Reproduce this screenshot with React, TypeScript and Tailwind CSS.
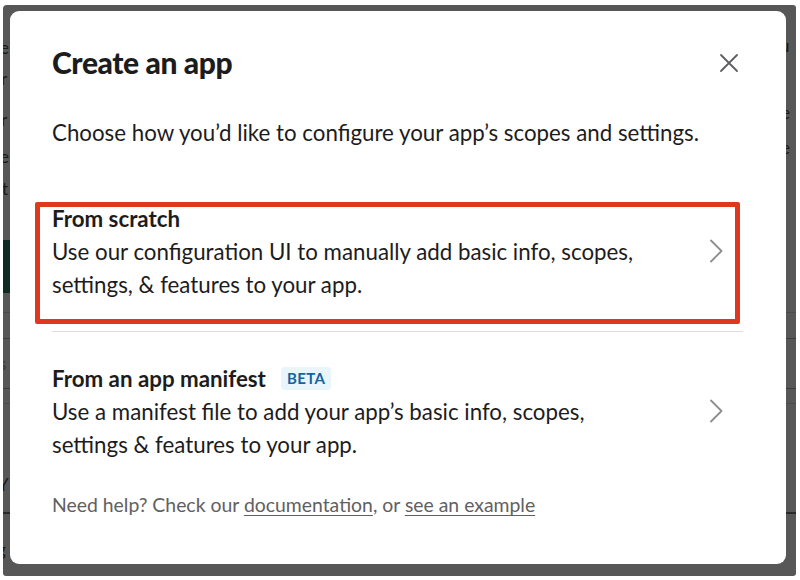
import React from "react";

const font = { fontFamily: "Lato, 'Noto Sans', sans-serif" };

function Chevron() {
  return (
    <svg width="14" height="24" viewBox="0 0 14 24" fill="none" className="shrink-0">
      <path d="M2 1.5 L12.5 12 L2 22.5" stroke="#8d8d8d" strokeWidth="1.8" strokeLinecap="round" strokeLinejoin="round" />
    </svg>
  );
}

function CloseX() {
  return (
    <svg width="20" height="20" viewBox="0 0 20 20" fill="none">
      <path d="M2 2 L18 18 M18 2 L2 18" stroke="#5e5d60" strokeWidth="1.8" strokeLinecap="round" />
    </svg>
  );
}

function Option({
  title,
  badge,
  line1,
  line2,
  className,
  children,
}: {
  title: string;
  badge?: string;
  line1: string;
  line2: string;
  className?: string;
  children?: React.ReactNode;
}) {
  return (
    <div className={"relative flex items-center justify-between py-[30px] " + (className ?? "")}>
      <div className="text-[22.3px] leading-[33px]">
        <div className="flex items-center gap-[15px] font-bold">
          {title}
          {badge && (
            <span className="bg-[#e8f5fa] text-[#1264a3] text-[15px] leading-[23px] px-[6px] rounded-[4px] font-bold tracking-[0.4px]">
              {badge}
            </span>
          )}
        </div>
        <div>{line1}</div>
        <div>{line2}</div>
      </div>
      <div className="mr-[20px] -mt-[2px]">
        <Chevron />
      </div>
      {children}
    </div>
  );
}

export default function App() {
  return (
    <div className="w-[800px] h-[580px] bg-white overflow-hidden" style={font}>
      <div className="ml-[3px] mt-[5px] w-[793px] h-[571px] bg-[#575757] rounded-tl-[4px] rounded-tr-[3px] rounded-b-[3px] flex pt-[6px] pb-[12px]">
        {/* left strip of the page behind the overlay */}
        <div className="relative w-[7px] shrink-0 overflow-hidden text-[#1a1a1a] text-[17px] leading-none">
          <span className="absolute left-[-3px] top-[28px]">e</span>
          <span className="absolute left-[-2px] top-[59px]">r</span>
          <span className="absolute left-[-2px] top-[100px]">r</span>
          <span className="absolute left-[-3px] top-[137px]">e</span>
          <span className="absolute left-[-1px] top-[169px]">t</span>
          <div className="absolute left-0 top-[229px] w-[7px] h-[53px] bg-[#0e2a22]" />
          <div className="absolute left-0 top-[301px] w-[7px] h-px bg-[#4a4a4a]" />
          <div className="absolute left-0 top-[327px] w-[7px] h-px bg-[#3c3c3c]" />
          <span className="absolute left-[-4px] top-[344px] text-[#3a3a3a]">s</span>
          <div className="absolute left-0 top-[377px] w-[7px] h-px bg-[#3c3c3c]" />
          <div className="absolute left-0 top-[392px] w-[7px] h-px bg-[#4c4c4c]" />
          <span className="absolute left-[-5px] top-[465px]">Y</span>
          <div className="absolute left-0 top-[501px] w-[7px] h-[2px] bg-[#2a2a2a]" />
          <span className="absolute left-[-6px] top-[530px]">g</span>
        </div>

        {/* modal */}
        <div className="w-[776px] shrink-0 bg-white rounded-[9px] pl-[42px] pr-[43px] pt-[33px] text-[#1d1c1d]">
          <div className="flex items-center justify-between h-[36px]">
            <h1 className="text-[30px] leading-[36px] font-black tracking-[-0.4px] text-[#1d1c1d]">Create an app</h1>
            <div className="mr-[4px] mt-[2px]">
              <CloseX />
            </div>
          </div>
          <p className="mt-[36px] text-[22.3px] leading-[33px]">
            Choose how you’d like to configure your app’s scopes and settings.
          </p>

          <div className="mt-[23px]">
            <Option
              title="From scratch"
              line1="Use our configuration UI to manually add basic info, scopes,"
              line2="settings, & features to your app."
              className="border-b border-[#dddddd]"
            >
              <div className="absolute left-[-17px] right-[3px] top-[30px] h-[122px] border-[5px] border-[#e0371f] rounded-[2px] pointer-events-none" />
            </Option>
            <Option
              title="From an app manifest"
              badge="BETA"
              line1="Use a manifest file to add your app’s basic info, scopes,"
              line2="settings & features to your app."
            />
          </div>

          <p className="text-[19.4px] leading-[28px] text-[#616061]">
            Need help? Check our <span className="underline underline-offset-[3px]">documentation</span>, or{" "}
            <span className="underline underline-offset-[3px]">see an example</span>
          </p>
        </div>

        {/* right strip of the page behind the overlay */}
        <div className="relative flex-1 overflow-hidden text-[#1a1a1a] text-[17px] leading-none">
          <span className="absolute left-[-6px] top-[26px]">u</span>
          <span className="absolute left-[-5px] top-[93px]">e</span>
          <span className="absolute left-[-5px] top-[128px]">e</span>
          <div className="absolute left-0 top-[301px] w-full h-px bg-[#4a4a4a]" />
          <div className="absolute left-0 top-[327px] w-full h-px bg-[#3c3c3c]" />
          <div className="absolute left-0 top-[377px] w-full h-px bg-[#3c3c3c]" />
          <div className="absolute left-0 top-[392px] w-full h-px bg-[#4c4c4c]" />
          <div className="absolute left-0 top-[501px] w-full h-[2px] bg-[#2a2a2a]" />
        </div>
      </div>
    </div>
  );
}
